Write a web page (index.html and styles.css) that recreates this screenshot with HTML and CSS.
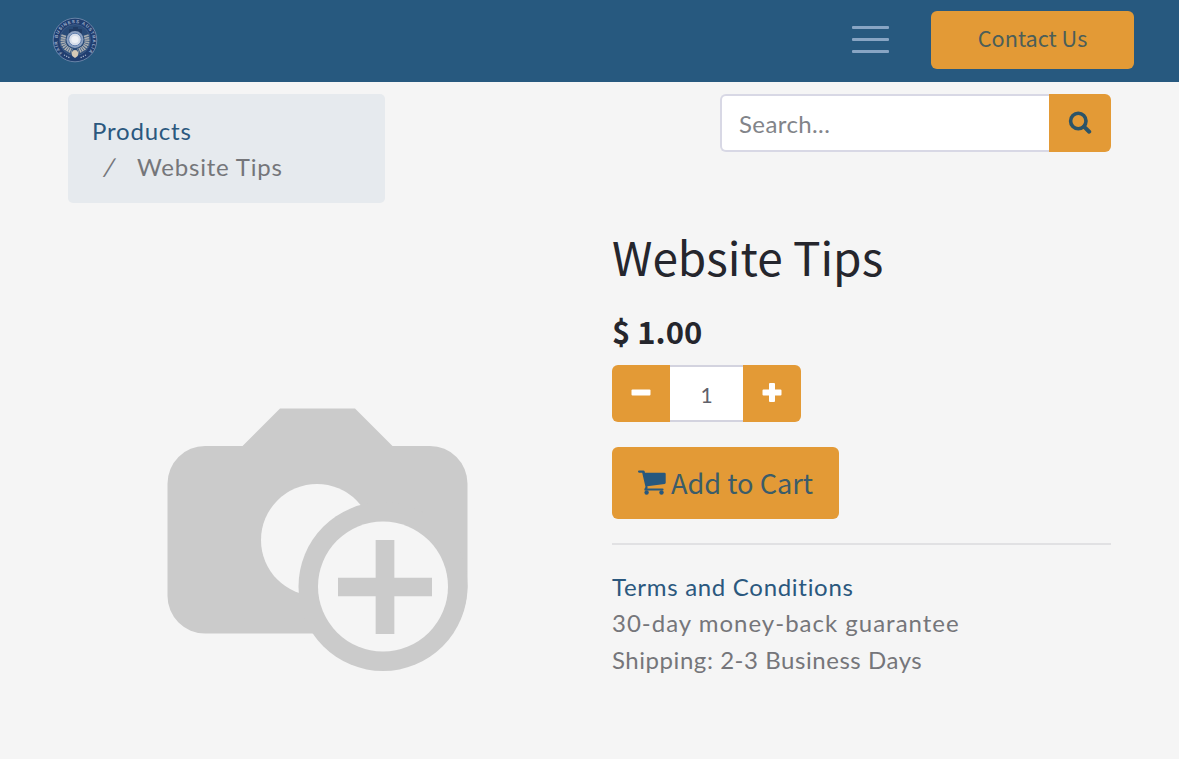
FILE: index.html
```
<!DOCTYPE html>
<html lang="en">
	<head>
		<meta charset="utf-8">
		<title>Website Tips</title>
		<link rel="stylesheet" href="styles.css">
	</head>
	<body>
	<header class="navbar">
		<a class="logo" href="#">
			<svg width="46" height="46" viewBox="0 0 46 46">
				<defs><path id="ring" d="M10.2 35.8A17.6 17.6 0 1 1 35.8 35.8"/></defs>
				<circle cx="23" cy="23" r="21.8" fill="#203e70" stroke="#7891b2" stroke-width=".8"/>
				<circle cx="23" cy="23" r="15.5" fill="#294b78" stroke="#526f99" stroke-width=".5"/>
				<text class="logo-text"><textPath href="#ring" textLength="80">FAIR BUSINESS AUSTRALIA</textPath></text>
				<path d="M12 18Q8 30 20 34M34 18Q38 30 26 34" fill="none" stroke="#a9adb0" stroke-width="5" stroke-dasharray="1.6 .6"/>
				<path d="M17 12h4v-2h5v2h4v5H17z" fill="#213c65"/>
				<circle cx="23" cy="22.5" r="8.5" fill="#8ca0bf"/>
				<circle cx="23" cy="22.5" r="6.3" fill="#d7deea" stroke="#5f7eae"/>
				<circle cx="23" cy="22.5" r="3.6" fill="#eef1f6"/>
				<path d="M19.5 36l1.500-2.500 2-.5 2 .5 1.500 2.500-.8 3-2.700 2-2.700-2z" fill="#d5c9b6"/>
				<path d="M12 38l6 3M34 38l-6 3" stroke="#a9b6cc" stroke-width="1.3" stroke-dasharray="1.2 1.2"/>
			</svg>
		</a>
		<button class="toggler" aria-label="Menu"><span></span><span></span><span></span></button>
		<a class="btn contact" href="#">Contact Us</a>
	</header>

	<main class="container">
		<div class="top">
			<ol class="breadcrumb">
				<li><a href="#">Products</a></li>
				<li><span class="slash">/</span>Website Tips</li>
			</ol>
			<form class="search">
				<input class="search-input" type="text" placeholder="Search...">
				<button class="search-btn" type="button" aria-label="Search">
					<svg width="24" height="24" viewBox="0 0 24 24" fill="none" stroke="#2c5468">
						<circle cx="10.3" cy="10" r="7.7" stroke-width="3.6"/>
						<path d="M16 15.6l5.2 5.1" stroke-width="4" stroke-linecap="round"/>
					</svg>
				</button>
			</form>
		</div>

		<div class="product">
			<div class="picture">
				<svg width="302" height="264" viewBox="0 0 302 264">
					<path fill="#cbcbcb" d="M75.500 38L113 .5h75L225.500 38H263a37.500 37.500 0 0 1 37.500 37.500V178A84.500 84.500 0 0 1 147 225.500H38A37.500 37.500 0 0 1 .5 188V75.500A37.500 37.500 0 0 1 38 38z"/>
					<circle cx="150" cy="132" r="56" fill="#f5f5f5"/>
					<circle cx="216" cy="178.500" r="84.500" fill="#cbcbcb"/>
					<circle cx="216" cy="178.500" r="65" fill="#f5f5f5"/>
					<path d="M218 132v94M171 179h94" stroke="#cbcbcb" stroke-width="18.700"/>
				</svg>
			</div>
			<div class="info">
				<h1>Website Tips</h1>
				<h4 class="price">$ 1.00</h4>
				<div class="quantity">
					<button class="qty-btn left" aria-label="Remove one">
						<svg width="20" height="20" viewBox="0 0 20 20"><rect x=".5" y="6.500" width="19" height="6" rx="1" fill="#fff"/></svg>
					</button>
					<input class="qty" type="text" value="1">
					<button class="qty-btn right" aria-label="Add one">
						<svg width="20" height="20" viewBox="0 0 20 20"><path d="M8 0h4q1 0 1 1v5.500h5.500q1 0 1 1v4q0 1-1 1H13V18q0 1-1 1H8q-1 0-1-1v-5.500H1.500q-1 0-1-1v-4q0-1 1-1H7V1q0-1 1-1z" fill="#fff"/></svg>
					</button>
				</div>
				<a class="btn cart" href="#">
					<svg width="28" height="25" viewBox="0 0 28 25" fill="#27587e">
						<path d="M1 .5h4.300q1 0 1.400 1.100l.3 1.200h19.500q1.200 0 1.200 1.200v8.800q0 1-1.100 1.200L9.300 16.300q.6 1.200 0 2.200h15.200q1.100 0 1.100 1t-1.100 1.100H7.700q-1.500 0-1.400-1.200.1-.6 1.200-2.500L4.200 2.700H1Q0 2.700 0 1.600T1 .5z"/>
						<circle cx="8.600" cy="22.500" r="2.200"/>
						<circle cx="23.500" cy="22.500" r="2.200"/>
					</svg>
					<span>Add to Cart</span>
				</a>
				<hr>
				<p class="terms">
					<a href="#">Terms and Conditions</a><br>
					<span class="guarantee">30-day money-back guarantee</span><br>
					<span class="shipping">Shipping: 2-3 Business Days</span>
				</p>
			</div>
		</div>
	</main>
	</body>
</html>
```

FILE: styles.css
```
* {
	box-sizing: border-box;
}
body {
	margin: 0;
	background-color: #f5f5f5;
	color: #75767a;
	font-family: Lato, "Open Sans", sans-serif;
	font-size: 24px;
	line-height: 36.4px;
}
a {
	color: #2b587e;
	text-decoration: none;
}
button {
	border: 0;
	padding: 0;
	cursor: pointer;
}
svg {
	display: block;
}
.navbar {
	display: flex;
	align-items: center;
	height: 82px;
	padding: 0 45px 3px 52px;
	background-color: #27597f;
}
.logo {
	margin-right: auto;
}
.logo-text {
	font-family: "Liberation Sans", sans-serif;
	font-size: 4.5px;
	font-weight: bold;
	fill: #9eb0cc;
}
.toggler {
	display: flex;
	flex-direction: column;
	gap: 9px;
	width: 37px;
	margin-right: 42px;
	background: none;
}
.toggler span {
	height: 3px;
	border-radius: 1px;
	background-color: #88a5c4;
}
.btn {
	display: flex;
	align-items: center;
	justify-content: center;
	border-radius: 6px;
	background-color: #e39a36;
	font-family: "Noto Sans CJK SC", sans-serif;
}
.contact {
	width: 203px;
	height: 58px;
	padding-bottom: 2px;
	color: #4b5e59;
	font-size: 21.7px;
}
.container {
	padding: 12px 68px 0;
}
.top {
	display: flex;
	justify-content: space-between;
	align-items: flex-start;
}
.breadcrumb {
	width: 317px;
	height: 109px;
	margin: 0;
	padding: 19px 24px;
	border-radius: 5px;
	background-color: #e6eaee;
	letter-spacing: 0.8px;
	list-style: none;
}
.slash {
	display: inline-block;
	width: 33px;
	margin-left: 12px;
	transform: skewX(-12deg);
}
.search {
	display: flex;
	width: 391px;
	height: 58px;
}
.search-input {
	flex: 1;
	min-width: 0;
	padding: 2px 18px 0 17px;
	border: 2px solid #d8d8e5;
	border-right: 0;
	border-radius: 6px 0 0 6px;
	background-color: #fff;
	font: inherit;
	letter-spacing: 0.4px;
}
.search-input::placeholder {
	color: #828489;
	opacity: 1;
}
.search-btn {
	display: flex;
	align-items: center;
	justify-content: center;
	width: 62px;
	border-radius: 0 6px 6px 0;
	background-color: #e39a36;
}
.product {
	display: flex;
	justify-content: space-between;
}
.picture {
	padding: 205px 0 0 99px;
}
.info {
	width: 499px;
	padding-top: 18px;
}
h1 {
	margin: 0;
	color: #25262d;
	font-family: "Noto Sans CJK SC", sans-serif;
	font-size: 46px;
	font-weight: 400;
	line-height: 70px;
}
.price {
	margin: 20px 0 14px;
	color: #25262d;
	font-family: "Noto Sans CJK SC", sans-serif;
	font-size: 31px;
	font-weight: 700;
	line-height: 40px;
}
.quantity {
	display: flex;
	width: 189px;
	height: 57px;
}
.qty-btn {
	display: flex;
	justify-content: center;
	width: 58px;
	padding-top: 18px;
	background-color: #e39a36;
}
.left {
	border-radius: 6px 0 0 6px;
}
.right {
	border-radius: 0 6px 6px 0;
}
.qty {
	flex: 1;
	min-width: 0;
	padding: 2px 0 0;
	border: 1px solid #d3d3df;
	border-width: 2px 0;
	background-color: #fff;
	color: #60616a;
	font-family: Lato, sans-serif;
	font-size: 21px;
	text-align: center;
}
.cart {
	gap: 5px;
	width: 227px;
	height: 72px;
	margin-top: 25px;
	padding-bottom: 2px;
	color: #3b5c69;
	font-size: 27.2px;
}
hr {
	height: 2px;
	margin: 24px 0;
	border: 0;
	background-color: #e1e1e3;
}
.terms {
	margin: 0;
	letter-spacing: 0.7px;
}
.guarantee {
	letter-spacing: 1px;
}
.shipping {
	letter-spacing: 0.55px;
}
```
